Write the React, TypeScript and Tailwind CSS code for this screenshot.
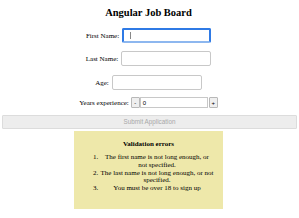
import React from "react";

export default function App() {
  return (
    <div className="w-[299px] h-[218px] overflow-hidden bg-white text-black font-['Liberation_Serif',serif] text-[7px] leading-[8px]">
      <div className="pt-[6px] text-center text-[10.5px] font-bold leading-[14px] pr-[2px]">Angular Job Board</div>

      <div className="mt-[8px] flex h-[15px] items-center justify-center gap-[3px] pr-[2px]">
        <span>First Name:</span>
        <div className="flex h-[15px] w-[89px] items-center rounded-[2px] border-2 border-[#2f7ae5] border-b-[#8db7ef] bg-white pl-[6px]">
          <div className="h-[7px] w-px bg-[#888]" />
        </div>
      </div>

      <div className="mt-[8px] flex h-[15px] items-center justify-center gap-[3px] pr-[2px]">
        <span>Last Name:</span>
        <div className="h-[15px] w-[90px] rounded-[2px] border border-[#c8c8c8] bg-white" />
      </div>

      <div className="mt-[9px] flex h-[15px] items-center justify-center gap-[3px] pr-[2px]">
        <span>Age:</span>
        <div className="h-[15px] w-[90px] rounded-[2px] border border-[#c8c8c8] bg-white" />
      </div>

      <div className="mt-[7px] flex h-[11px] items-center justify-center pr-[2px]">
        <span className="mr-[2px]">Years experience:</span>
        <div className="flex h-[11px] w-[9px] items-center justify-center rounded-[1px] border border-[#b8b8b8] bg-[#efefef] font-['Liberation_Sans',sans-serif] text-[6px] leading-none">-</div>
        <div className="flex h-[11px] w-[68px] items-center border border-[#c8c8c8] bg-white pl-[2px] font-['Liberation_Sans',sans-serif] text-[6px] leading-none">0</div>
        <div className="ml-px flex h-[11px] w-[9px] items-center justify-center rounded-[1px] border border-[#b8b8b8] bg-[#efefef] font-['Liberation_Sans',sans-serif] text-[6px] leading-none">+</div>
      </div>

      <div className="mx-[2px] mt-[7px] flex h-[14px] items-center justify-center rounded-[1px] border border-[#dcdcdc] bg-[#ededed] font-['Liberation_Sans',sans-serif] text-[6.3px] leading-none text-[#a8a8a8]">
        Submit Application
      </div>

      <div className="ml-[74px] mt-[2px] h-[78px] w-[149px] bg-[#eee8aa] px-[9px] pt-[9px] text-center">
        <div className="font-bold leading-[8px]">Validation errors</div>
        <ol className="mt-[6px] list-decimal list-outside pl-[17px] leading-[7.8px]">
          <li>The first name is not long enough, or not specified.</li>
          <li>The last name is not long enough, or not specified.</li>
          <li>You must be over 18 to sign up</li>
        </ol>
      </div>
    </div>
  );
}
